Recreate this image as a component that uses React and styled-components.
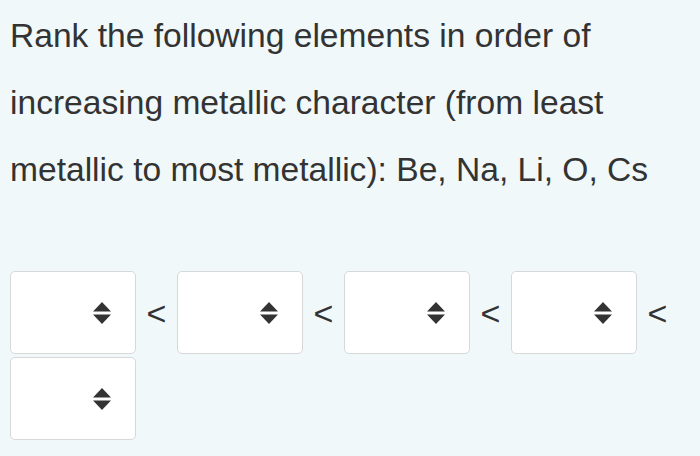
import styled, { createGlobalStyle } from 'styled-components';

const GlobalStyle = createGlobalStyle`
  body {
    margin: 0;
    background: #f0f8fa;
    font-family: "Liberation Sans", Arial, Helvetica, sans-serif;
    color: #333;
  }
`;

const Page = styled.div`
  padding: 2px 10px 0 10px;
`;

const Question = styled.p`
  margin: 0;
  font-size: 33.6px;
  line-height: 67px;
  color: #333;
  max-width: 640px;
`;

const RankRow = styled.div`
  display: flex;
  flex-wrap: wrap;
  row-gap: 3px;
  margin-top: 68px;
  width: 690px;
`;

const Slot = styled.div`
  display: flex;
  align-items: center;
`;

const Select = styled.div`
  box-sizing: border-box;
  width: 126px;
  height: 83px;
  background: #fff;
  border: 1.5px solid #d6d8d9;
  border-radius: 5px;
  display: flex;
  align-items: center;
  justify-content: flex-end;
  padding-right: 24px;
`;

const LessThan = styled.span`
  font-size: 34px;
  color: #333;
  width: 41px;
  text-align: center;
  line-height: 1;
`;

const SortIcon = () => (
  <svg width="18" height="22" viewBox="0 0 18 22">
    <polygon points="9,0 18,9.5 0,9.5" fill="#333" />
    <polygon points="0,12.5 18,12.5 9,22" fill="#333" />
  </svg>
);

const App = () => {
  const slots = [0, 1, 2, 3, 4];
  return (
    <Page>
      <GlobalStyle />
      <Question>
        Rank the following elements in order of increasing metallic character (from least
        metallic to most metallic): Be, Na, Li, O, Cs
      </Question>
      <RankRow>
        {slots.map((s, i) => (
          <Slot key={s}>
            <Select>
              <SortIcon />
            </Select>
            {i < slots.length - 1 && <LessThan>&lt;</LessThan>}
          </Slot>
        ))}
      </RankRow>
    </Page>
  );
};

export default App;
